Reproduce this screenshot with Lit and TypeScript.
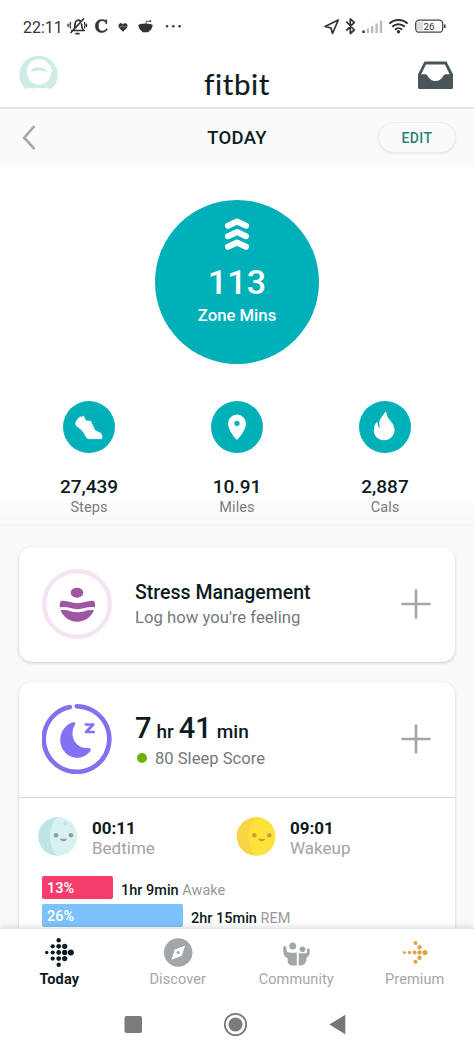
import { LitElement, html, css, svg } from "lit";
import { customElement } from "lit/decorators.js";

const INK = "#0d1b22";
const GREY = "#4a555b";

const dots = (list: number[][], fill: string) =>
  list.map(([x, y, r]) => svg`<circle cx=${x} cy=${y} r=${r} fill=${fill}></circle>`);

const todayDots = [
  [58.7, 940.3, 2.2], [52.7, 946.3, 2.1], [58.7, 946.3, 2.4], [64.7, 946.3, 2.6],
  [46.7, 952.5, 1.7], [52.7, 952.5, 2.1], [58.7, 952.5, 2.4], [64.7, 952.5, 2.7], [70.9, 952.5, 3],
  [52.7, 958.6, 2.1], [58.7, 958.6, 2.4], [64.7, 958.6, 2.6], [58.7, 964.7, 2.2],
];
const premiumDots = [
  [415, 943, 2.1], [419, 947.2, 2.2], [404, 952.5, 1.5], [409, 952.5, 1.7], [414, 952.5, 2],
  [419, 952.5, 2.3], [424.5, 952.5, 2.6], [419, 957.7, 2.2], [415, 961.8, 2.1],
];

@customElement("status-bar")
class StatusBar extends LitElement {
  static styles = css`
    :host { display: flex; height: 53px; padding-left: 23px; align-items: flex-start; box-sizing: border-box; }
    .time { width: 43px; font-size: 16px; line-height: 55px; color: #333; }
    svg { display: block; }
  `;
  render() {
    return html`
      <span class="time">22:11</span>
      <svg width="408" height="53" viewBox="66 0 408 53" fill="none">
        <g stroke="#333" stroke-width="1.7" stroke-linecap="round">
          <path d="M71.8 30.5h12.4M73.5 30c1.5-1.500 1.300-3.200 1.400-5 .3-5.600 5-5.800 5.500-3.300M81.500 24c.2 2.500.3 4.500 1.800 6M71 32.500L83.500 19M76 33.700h3"/>
          <path d="M70.500 22.500q-1 3 0 5.500M68 24.200v2.400M84.500 22.500q1 3 0 5.500M86.500 24.200v2.400" stroke-width="1.300"/>
        </g>
        <path d="M106.800 19.700v4.300h-.8c-.5-2-1.700-3.200-3.700-3.200-2.600 0-4 2-4 5.100s1.600 5.200 4.200 5.200c1.800 0 3.100-.9 4-2.500l.9.500c-1 2.200-2.900 3.500-5.600 3.500-4 0-6.500-2.700-6.500-6.500s2.700-6.600 6.500-6.600c1.600 0 2.800.4 3.600 1l.5-.8z" fill="#333" stroke="#333" stroke-width=".5"/>
        <path d="M123 31.800l-3.800-3.900c-1.600-2-.3-4.700 1.700-4.700 1 0 1.700.5 2.100 1.200.4-.7 1.200-1.200 2.200-1.200 2 0 3.200 2.700 1.600 4.700z" fill="#333"/>
        <path d="M119.500 26.700h2l1-1 1.200 1.700 1-.8h2" stroke="#aaa" stroke-width=".7"/>
        <path d="M138.500 24.800h14c0 3.500-1.500 5-3 6l-1 1.400h-6l-1-1.400c-1.500-1-3-2.500-3-6z" fill="#333"/>
        <ellipse cx="145.500" cy="25.500" rx="7" ry="2" fill="#333"/>
        <path d="M145.800 24l.5-3 3 .5" stroke="#555" stroke-width="1"/><circle cx="150.200" cy="21.200" r="1.100" fill="#555"/>
        <g fill="#333"><circle cx="167" cy="26.300" r="1.200"/><circle cx="173.300" cy="26.300" r="1.200"/><circle cx="179.600" cy="26.300" r="1.200"/></g>
        <path d="M338.300 20l-13.300 6.500 6 1.500 1.500 5.500z" stroke="#333" stroke-width="1.700" stroke-linejoin="round"/>
        <path d="M346.300 21.500l8 8.500-4 3.500V19l4 3.400-8 8.200" stroke="#333" stroke-width="1.700" stroke-linejoin="round"/>
        <g stroke-width="2.400"><path d="M363.500 33v-2.500" stroke="#333"/><path d="M367.800 33v-4.600M372.200 33v-7M376.600 33v-9.500M381 33V20.500" stroke="#bbb"/></g>
        <g stroke="#333" stroke-width="2"><path d="M389.300 23.600c5.200-4.900 13.200-4.900 18.400 0M392.200 26.800c3.600-3.400 9-3.400 12.600 0M395 29.700c2-1.900 5-1.900 7 0"/></g>
        <circle cx="398.500" cy="31.800" r="1.700" fill="#333"/>
        <rect x="415.700" y="20.200" width="27" height="12" rx="3.500" stroke="#444" stroke-width="1.300"/>
        <path d="M418.500 22h4.500v8.500h-4.500a1.500 1.500 0 0 1-1.500-1.500v-5.500a1.500 1.500 0 0 1 1.500-1.500z" fill="#ddd"/>
        <path d="M444.800 24.500v3.500" stroke="#333" stroke-width="1.500"/>
        <text x="429" y="30" text-anchor="middle" font-size="9.800" fill="#333">26</text>
      </svg>
    `;
  }
}

@customElement("app-header")
class AppHeader extends LitElement {
  static styles = css`
    :host { display: block; }
    .brand { display: grid; grid-template-columns: 40px 1fr 40px; height: 56px; padding: 0 19px; box-sizing: border-box; border-bottom: 2px solid #e5e6e6; }
    .logo { font: 400 29.500px/62px Lato, sans-serif; letter-spacing: .6px; font-variant-ligatures: none; text-align: center; color: #0d1b22; -webkit-text-stroke: .2px #0d1b22; }
    svg { display: block; }
    .day { display: grid; grid-template-columns: 78px 1fr 78px; align-items: center; height: 57px; padding: 0 18px; box-sizing: border-box; background: #fafafa; }
    .title { text-align: center; font-size: 18.500px; font-weight: 500; line-height: 22px; letter-spacing: .3px; padding-top: 1px; color: #0d1b22; }
    .edit { height: 31px; border-radius: 16px; background: #fafafa; border: 1px solid #ececec; box-shadow: 0 1px 2px #00000014; box-sizing: border-box; text-align: center; font-size: 14px; font-weight: 500; line-height: 30px; letter-spacing: .4px; color: #2d8077; }
  `;
  render() {
    return html`
      <div class="brand">
        <svg width="40" height="54" viewBox="19 53 40 54">
          <path d="M25.500 89A19.200 19.200 0 1 1 51.500 89L46 87.800l-3 .7-4.500-.8-4.500.8-3-.7z" fill="#cfebe8"/>
          <path d="M27 70.500c.5-6.500 5-11.200 11.800-11.200 6 0 10.500 3.500 12.200 9l1.800 2.200-1.600 2.200C50.500 79.500 45.500 84.700 39 84.700S28 79.800 27 73z" fill="#fff"/>
          <path d="M30.500 72q.5-4.500 8.300-4.500t8.300 4.500q-8.300-3-16.600 0z" fill="#cfebe8"/>
        </svg>
        <div class="logo">fitbit</div>
        <svg width="40" height="54" viewBox="415 53 40 54">
          <path fill-rule="evenodd" d="M424.500 61.500h22l6.500 12.800V87.500a1.500 1.500 0 0 1-1.500 1.500h-32a1.500 1.500 0 0 1-1.500-1.500V74.300zM426 64.500l-4.800 9.800h4.500c2.300 0 2.600 6.700 9.800 6.700s7.500-6.700 9.900-6.700h4.200l-4.700-9.800z" fill=${GREY}/>
        </svg>
      </div>
      <div class="day">
        <svg width="40" height="30" viewBox="18 123 40 30"><path d="M34.500 126l-10.300 11.700 10.300 11.300" fill="none" stroke="#a9a9a9" stroke-width="2.600"/></svg>
        <div class="title">TODAY</div>
        <div class="edit">EDIT</div>
      </div>
    `;
  }
}

@customElement("activity-summary")
class ActivitySummary extends LitElement {
  static styles = css`
    :host { display: block; height: 360px; padding-top: 34px; box-sizing: border-box; background: linear-gradient(#fff 325px, #f8f8f8); border-bottom: 1px solid #f3f3f3; }
    svg { display: block; }
    .zone { width: 164px; height: 164px; margin: 0 auto; border-radius: 50%; background: #00b0b9; color: #fff; text-align: center; }
    .zone svg { margin: 0 auto; }
    .count { font-size: 34px; font-weight: 500; line-height: 40px; letter-spacing: .2px; }
    .unit { font-size: 16.700px; font-weight: 500; line-height: 27px; }
    .stats { display: grid; grid-template-columns: repeat(3, 148px); justify-content: center; margin-top: 37px; text-align: center; }
    .stats svg { margin: 0 auto 22px; }
    .num { font-size: 19px; font-weight: 500; line-height: 24px; color: #0d1b22; }
    .name { font-size: 14.500px; line-height: 17px; letter-spacing: .1px; color: #777c7f; }
  `;
  render() {
    return html`
      <div class="zone">
        <svg width="30" height="62" viewBox="222.500 200 30 62"><path d="M228.500 225.700l9-4.200 9 4.200M228.500 236.200l9-4.200 9 4.200M228.500 246.700l9-4.200 9 4.200" fill="none" stroke="#fff" stroke-width="6" stroke-linecap="round" stroke-linejoin="round"/></svg>
        <div class="count">113</div>
        <div class="unit">Zone Mins</div>
      </div>
      <div class="stats">
        <div>
          <svg width="52" height="52" viewBox="63.300 401 52 52"><circle cx="89.300" cy="427" r="26" fill="#00b0b9"/>
            <path d="M76 423c.8-2.700 2.700-5 4.600-6.200.6 0 .8.500 1.400.400.600-.2 1-1.200 1.900-1.200.8.800.8 3 1.800 4.100 1.700 1.400 3.800.8 5.300 1.200.6.400.8.900.8 1.600l-1.800.9 2.300-.1.800 1.800-2.100.8 2.700.1.700 1.900-2 .9 2.500.1c1.500 2.700 4.500 2.500 6.400 4.300 1.200 1.200 1.300 3.700.6 5.100h-12.500c-1.200 0-2-.4-2.700-1.400-3.200-5.500-4.900-8.500-9.600-11-1-.8-1.300-2.200-1.100-3.300z" fill="#fff" stroke="#fff" stroke-width=".6" stroke-linejoin="round"/></svg>
          <div class="num">27,439</div><div class="name">Steps</div>
        </div>
        <div>
          <svg width="52" height="52" viewBox="211 401 52 52"><circle cx="237" cy="427" r="26" fill="#00b0b9"/>
            <path fill-rule="evenodd" d="M237 440c-3.500-3.800-9-10.500-9-16.500a9 9 0 0 1 18 0c0 6-5.500 12.700-9 16.500zM237 420.700a2.600 2.600 0 1 0 0 5.200 2.600 2.600 0 0 0 0-5.200z" fill="#fff"/></svg>
          <div class="num">10.91</div><div class="name">Miles</div>
        </div>
        <div>
          <svg width="52" height="52" viewBox="359.500 401 52 52"><circle cx="385.500" cy="427" r="26" fill="#00b0b9"/>
            <path d="M386 412c.7 0 1 .5 1 1.200.4 4.300 3.600 6.600 5.700 9.800 1.500 2.300 2.300 4.500 2.300 7 0 6-4.500 10.200-10.400 10.200-6 0-10.300-4.200-10.300-10 0-3 .9-5.500 2.400-7.600.8-.8 1.400-.4 1.500.7.200 2 .5 3.500 1.500 4.800.8-.5.300-2.300 0-4.300-.2-5 3.500-7.400 5.600-11.200.2-.4.400-.6.700-.6z" fill="#fff"/></svg>
          <div class="num">2,887</div><div class="name">Cals</div>
        </div>
      </div>
    `;
  }
}

@customElement("tile-list")
class TileList extends LitElement {
  static styles = css`
    :host { display: flex; flex-direction: column; gap: 20px; padding: 21px 19px 0; background: #f9f9f9; }
    svg { display: block; }
    .card { border-radius: 13px; background: #fff; box-shadow: 0 1px 3px #00000033; }
    .row { display: grid; grid-template-columns: 93px 1fr 32px; height: 115px; padding: 0 23px 1px; box-sizing: border-box; align-items: center; }
    .title { font-size: 19.500px; font-weight: 500; line-height: 26px; padding-top: 2px; color: #0d1b22; }
    .sub { font-size: 16.700px; line-height: 24px; color: #74797c; }
    .duration { font-weight: 500; line-height: 29px; font-size: 19px; letter-spacing: .1px; color: #0d1b22; white-space: pre; padding-top: 6px; }
    .duration b { font-size: 29px; font-weight: 500; }
    .score { display: flex; align-items: center; gap: 8px; font-size: 16.600px; line-height: 25px; color: #74797c; padding-left: 2px; }
    .score i { width: 10px; height: 10px; border-radius: 50%; background: #6fb000; }
    .detail { border-top: 1px solid #d9d9d9; padding: 18px 19px 0; height: 240px; box-sizing: border-box; }
    .times { display: grid; grid-template-columns: 198px 1fr; height: 44px; }
    .times > div { display: flex; gap: 14px; }
    .clock { font-size: 17px; font-weight: 700; line-height: 24px; color: #0d1b22; }
    .when { font-size: 17px; line-height: 17px; color: #a3a3a3; }
    .stage { display: flex; gap: 8px; height: 23px; margin: 0 0 5px 4px; color: #0d1b22; }
    .first { margin-top: 16px; }
    .bar { border-radius: 2px; color: #fff; font-size: 14.500px; font-weight: 500; line-height: 25px; padding-left: 5px; box-sizing: border-box; }
    .pink { background: #f43d6b; }
    .blue { background: #7ec2fc; }
    .len { font-size: 14.500px; font-weight: 500; line-height: 29px; white-space: nowrap; }
    .len span { font-weight: 400; color: #999; }
  `;
  plus = (cy: number) => html`<svg width="32" height="32" viewBox="400 ${cy - 16} 32 32"><path d="M402.500 ${cy}h27M416 ${cy - 13.5}v27" stroke="#a4a6a8" stroke-width="2.600" stroke-linecap="round"/></svg>`;
  stages = [
    { pct: 13, width: 71, tone: "pink", time: "1hr 9min", name: "Awake" },
    { pct: 26, width: 141, tone: "blue", time: "2hr 15min", name: "REM" },
  ];
  render() {
    return html`
      <section class="card row">
        <svg width="70" height="70" viewBox="42 569 70 70">
          <circle cx="77" cy="604" r="32.800" fill="none" stroke="#f3e4f1" stroke-width="4.400"/>
          <g fill="#a054a4"><ellipse cx="77" cy="592.700" rx="6.300" ry="5"/>
          <path d="M61 601c6-1 10 2.300 16.500 2.300S88 600 94 601c1.300 2 1.300 4 .8 6.500-6.500-1.500-11 1.800-17.300 1.800s-10.500-3.300-17.500-1.800c-.6-2.500-.3-4.500 1-6.500z"/>
          <path d="M60.500 610.300c7-1.300 10.500 2 17 2s10-3.300 16.500-2c-3 7-9.500 11.500-16.800 11.500s-13.700-4.500-16.700-11.500z"/></g>
        </svg>
        <div><div class="title">Stress Management</div><div class="sub">Log how you're feeling</div></div>
        ${this.plus(604)}
      </section>
      <section class="card">
        <div class="row">
          <svg width="70" height="70" viewBox="42 704 70 70">
            <path d="M76.800 706.300a32.800 32.800 0 1 1-7 .7" fill="none" stroke="#8270ee" stroke-width="4.600" stroke-linecap="round"/>
            <path d="M73 722.300c1.700-.6 3 .7 2 2.300-6.500 11 .5 24.500 13 23.400 2.500-.4 3.500 1.200 2.300 3-7 9.500-20 8.500-26.200.3-8-11-2.500-25.500 8.900-29z" fill="#8371f5"/>
            <path d="M85.800 724.500h7.500l-7.300 7.500h7.800" fill="none" stroke="#8371f5" stroke-width="2.700" stroke-linecap="round" stroke-linejoin="round"/>
          </svg>
          <div>
            <div class="duration"><b>7</b> hr <b>41</b> min</div>
            <div class="score"><i></i>80 Sleep Score</div>
          </div>
          ${this.plus(739)}
        </div>
        <div class="detail">
          <div class="times">
            <div>
              <svg width="40" height="40" viewBox="38.500 816.500 40 40"><circle cx="58" cy="837" r="19.300" fill="#bfe4e5"/>
                <path d="M58 817.700a19.300 19.300 0 0 1 0 38.600c-10-9-10-30 0-38.600z" fill="#d9f2f1"/><circle cx="65.500" cy="824" r="2" fill="#c3e3e2"/><circle cx="71" cy="827" r="1" fill="#c3e3e2"/>
                <g fill="#86a2a2"><circle cx="56.500" cy="835.700" r="2.300"/><circle cx="71.500" cy="835.700" r="2.300"/><path d="M60.500 839.300h7c-.3 3.200-6.700 3.200-7 0z"/></g></svg>
              <div><div class="clock">00:11</div><div class="when">Bedtime</div></div>
            </div>
            <div>
              <svg width="40" height="40" viewBox="236.500 816.500 40 40"><circle cx="256.500" cy="837" r="19.300" fill="#f8d546"/>
                <path d="M256.500 817.700a19.300 19.300 0 0 1 0 38.600c-10-9-10-30 0-38.600z" fill="#fde23c"/>
                <g fill="#c9a22f"><circle cx="254.800" cy="835.700" r="2.300"/><circle cx="269.800" cy="835.700" r="2.300"/><path d="M258.800 839.300h7c-.3 3.200-6.700 3.200-7 0z"/></g></svg>
              <div><div class="clock">09:01</div><div class="when">Wakeup</div></div>
            </div>
          </div>
          ${this.stages.map((s, i) => html`
            <div class="stage ${i ? "" : "first"}">
              <div class="bar ${s.tone}" style="width:${s.width}px">${s.pct}%</div>
              <div class="len">${s.time} <span>${s.name}</span></div>
            </div>`)}
        </div>
      </section>
    `;
  }
}

@customElement("bottom-nav")
class BottomNav extends LitElement {
  static styles = css`
    :host { display: block; background: #fff; border-top: 1px solid #e4e4e4; box-shadow: 0 -2px 5px #0000001a; }
    svg { display: block; margin: 0 auto; }
    .tabs { display: grid; grid-template-columns: repeat(4, 118.500px); height: 65px; text-align: center; font-size: 14.500px; line-height: 20px; letter-spacing: .1px; color: #a5a7a8; }
    .on { color: #0d1b22; font-weight: 700; }
  `;
  render() {
    return html`
      <div class="tabs">
        <div class="on"><svg width="40" height="41" viewBox="39 929 40 41">${dots(todayDots, INK)}</svg>Today</div>
        <div><svg width="40" height="41" viewBox="157.500 929 40 41"><circle cx="177.700" cy="952.500" r="14.300" fill="#a2a6a9"/><path fill-rule="evenodd" d="M184.500 945.700l-3.200 10-10.500 4 3.500-10.200zM177.700 951.100a1.500 1.500 0 1 0 0 3 1.500 1.500 0 0 0 0-3z" fill="#fff"/></svg>Discover</div>
        <div><svg width="40" height="41" viewBox="276 929 40 41"><g fill="#a2a6a9"><circle cx="292.700" cy="946" r="3.500"/><circle cx="302.500" cy="949.300" r="2.800"/>
          <path d="M283.500 946.300h2.600l.9 5.800c3 .9 6 .4 9.800.3v13.200h-3.700c-3.700 0-5.500-1.600-5.500-5.500v-2c-3.700-1.600-5-4-4.100-11.800z"/>
          <path d="M298.700 953.200c3 0 5.700.3 8.100-.3l.4-4.400h2.300c.7 5.500-.1 7.500-2.800 8.900-.2 5.800-2.500 8-8 8.200z"/></g></svg>Community</div>
        <div><svg width="40" height="41" viewBox="394.500 929 40 41">${dots(premiumDots, "#e0a548")}</svg>Premium</div>
      </div>
      <svg width="474" height="59" viewBox="0 994 474 59">
        <rect x="124.500" y="1016" width="17.500" height="17" rx="2" fill="#7b7b7b"/>
        <circle cx="235.500" cy="1024.500" r="10.700" fill="none" stroke="#777" stroke-width="1.700"/><circle cx="235.500" cy="1024.500" r="7" fill="#7b7b7b"/>
        <path d="M345.300 1014.800v19.500l-16-9.800z" fill="#777"/>
      </svg>
    `;
  }
}

@customElement("app-root")
class AppRoot extends LitElement {
  static styles = css`
    :host { display: flex; flex-direction: column; width: 474px; height: 1053px; overflow: hidden; background: #fff; font-family: Roboto, sans-serif; }
    .feed { flex: 1; min-height: 0; overflow: hidden; }
    bottom-nav { flex: none; height: 125px; box-sizing: border-box; }
  `;
  render() {
    return html`
      <status-bar></status-bar>
      <app-header></app-header>
      <main class="feed"><activity-summary></activity-summary><tile-list></tile-list></main>
      <bottom-nav></bottom-nav>
    `;
  }
}
